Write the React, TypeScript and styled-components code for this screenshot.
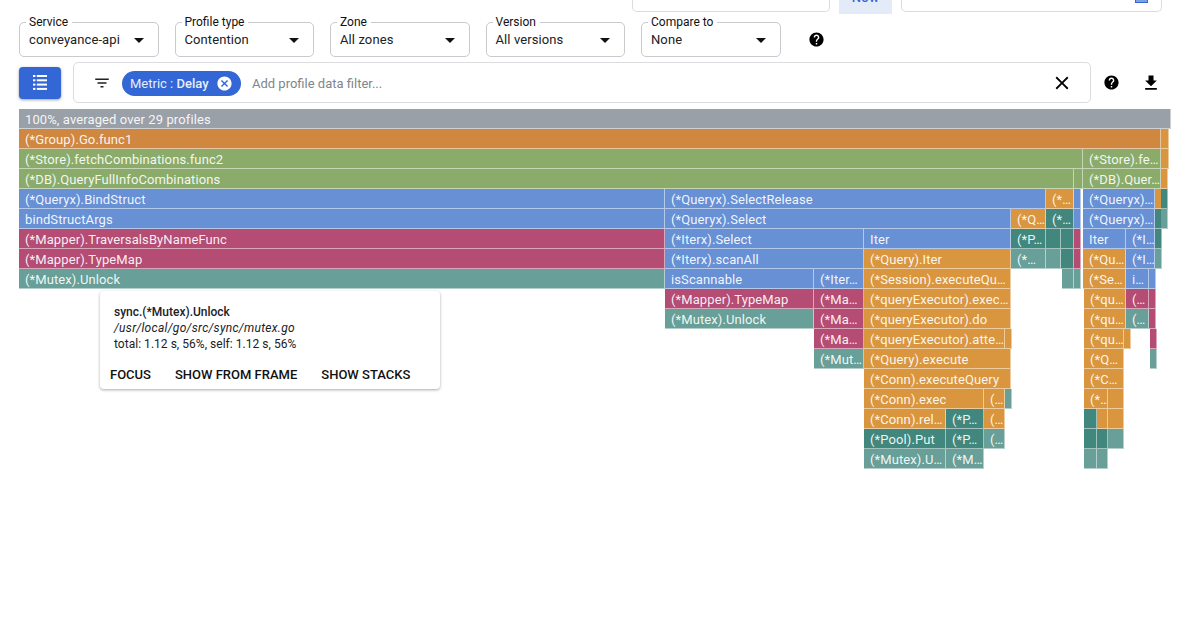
import React from 'react';
import styled, { createGlobalStyle } from 'styled-components';
import { MdArrowDropDown, MdClose, MdFileDownload, MdFilterList, MdHelp, MdCancel } from 'react-icons/md';

const C = {
  gray: '#9aa0a8',
  top: '#d08841',
  green: '#8aab6a',
  blue: '#6890d5',
  red: '#b54c74',
  dark: '#41877d',
  teal: '#689f98',
  orange: '#d9963f',
};

type Color = keyof typeof C;
// row, left x, right x, colour, label
type Frame = [number, number, number, Color, string?];

const frames: Frame[] = [
  [0, 19, 1171, 'gray', '100%, averaged over 29 profiles'],
  [1, 19, 1161, 'top', '(*Group).Go.func1'],
  [1, 1161, 1169, 'orange'],
  [2, 19, 1083, 'green', '(*Store).fetchCombinations.func2'],
  [2, 1083, 1161, 'green', '(*Store).fe…'],
  [2, 1161, 1169, 'orange'],
  [3, 19, 1074, 'green', '(*DB).QueryFullInfoCombinations'],
  [3, 1074, 1083, 'green'],
  [3, 1083, 1161, 'green', '(*DB).Quer…'],
  [3, 1161, 1167, 'orange'],
  [4, 19, 665, 'blue', '(*Queryx).BindStruct'],
  [4, 665, 1046, 'blue', '(*Queryx).SelectRelease'],
  [4, 1046, 1074, 'orange', '(*…'],
  [4, 1074, 1081, 'blue'],
  [4, 1083, 1155, 'blue', '(*Queryx)…'],
  [4, 1155, 1161, 'orange'],
  [4, 1161, 1167, 'dark'],
  [5, 19, 665, 'blue', 'bindStructArgs'],
  [5, 665, 1011, 'blue', '(*Queryx).Select'],
  [5, 1011, 1046, 'orange', '(*Q…'],
  [5, 1046, 1074, 'dark', '(*…'],
  [5, 1074, 1081, 'blue'],
  [5, 1083, 1155, 'blue', '(*Queryx)…'],
  [5, 1155, 1161, 'dark'],
  [5, 1161, 1167, 'teal'],
  [6, 19, 665, 'red', '(*Mapper).TraversalsByNameFunc'],
  [6, 665, 864, 'blue', '(*Iterx).Select'],
  [6, 864, 1011, 'blue', 'Iter'],
  [6, 1011, 1046, 'dark', '(*P…'],
  [6, 1046, 1061, 'dark'],
  [6, 1061, 1074, 'dark'],
  [6, 1074, 1081, 'red'],
  [6, 1083, 1126, 'blue', 'Iter'],
  [6, 1126, 1155, 'blue', '(*I…'],
  [6, 1155, 1160, 'dark'],
  [7, 19, 665, 'red', '(*Mapper).TypeMap'],
  [7, 665, 864, 'blue', '(*Iterx).scanAll'],
  [7, 864, 1011, 'orange', '(*Query).Iter'],
  [7, 1011, 1046, 'teal', '(*…'],
  [7, 1046, 1061, 'teal'],
  [7, 1061, 1074, 'dark'],
  [7, 1074, 1081, 'red'],
  [7, 1083, 1126, 'orange', '(*Qu…'],
  [7, 1126, 1155, 'blue', '(*I…'],
  [7, 1155, 1160, 'teal'],
  [8, 19, 665, 'teal', '(*Mutex).Unlock'],
  [8, 665, 814, 'blue', 'isScannable'],
  [8, 814, 864, 'blue', '(*Iter…'],
  [8, 864, 1011, 'orange', '(*Session).executeQu…'],
  [8, 1062, 1074, 'teal'],
  [8, 1074, 1081, 'teal'],
  [8, 1083, 1126, 'orange', '(*Se…'],
  [8, 1126, 1149, 'blue', 'i…'],
  [8, 1149, 1155, 'blue'],
  [9, 665, 814, 'red', '(*Mapper).TypeMap'],
  [9, 814, 864, 'red', '(*Ma…'],
  [9, 864, 1011, 'orange', '(*queryExecutor).exec…'],
  [9, 1084, 1126, 'orange', '(*qu…'],
  [9, 1126, 1149, 'red', '(…'],
  [9, 1149, 1155, 'red'],
  [10, 665, 814, 'teal', '(*Mutex).Unlock'],
  [10, 814, 864, 'red', '(*Ma…'],
  [10, 864, 1011, 'orange', '(*queryExecutor).do'],
  [10, 1084, 1126, 'orange', '(*qu…'],
  [10, 1126, 1149, 'teal', '(…'],
  [10, 1149, 1155, 'red'],
  [11, 814, 864, 'red', '(*Ma…'],
  [11, 864, 1005, 'orange', '(*queryExecutor).atte…'],
  [11, 1005, 1011, 'orange'],
  [11, 1084, 1124, 'orange', '(*qu…'],
  [11, 1124, 1126, 'orange'],
  [11, 1150, 1155, 'red'],
  [12, 814, 864, 'teal', '(*Mut…'],
  [12, 864, 1011, 'orange', '(*Query).execute'],
  [12, 1084, 1124, 'orange', '(*Q…'],
  [12, 1150, 1155, 'teal'],
  [13, 864, 1011, 'orange', '(*Conn).executeQuery'],
  [13, 1084, 1124, 'orange', '(*C…'],
  [14, 864, 984, 'orange', '(*Conn).exec'],
  [14, 984, 1005, 'orange', '(…'],
  [14, 1005, 1011, 'teal'],
  [14, 1084, 1108, 'orange', '(*…'],
  [14, 1108, 1124, 'orange'],
  [15, 864, 946, 'orange', '(*Conn).rel…'],
  [15, 946, 984, 'dark', '(*P…'],
  [15, 984, 1005, 'orange', '(…'],
  [15, 1084, 1097, 'dark'],
  [15, 1097, 1108, 'orange'],
  [15, 1108, 1124, 'orange'],
  [16, 864, 946, 'dark', '(*Pool).Put'],
  [16, 946, 984, 'dark', '(*P…'],
  [16, 984, 1005, 'teal', '(…'],
  [16, 1084, 1097, 'dark'],
  [16, 1097, 1108, 'dark'],
  [16, 1108, 1124, 'teal'],
  [17, 864, 946, 'teal', '(*Mutex).U…'],
  [17, 946, 984, 'teal', '(*M…'],
  [17, 1084, 1097, 'teal'],
  [17, 1097, 1108, 'teal'],
];

const selects = [
  { label: 'Service', value: 'conveyance-api' },
  { label: 'Profile type', value: 'Contention' },
  { label: 'Zone', value: 'All zones' },
  { label: 'Version', value: 'All versions' },
  { label: 'Compare to', value: 'None' },
];

function ListIcon() {
  return (
    <svg width="16" height="16" viewBox="0 0 16 16" fill="currentColor">
      {[1, 5.3, 9.6, 13.9].map((y) => (
        <g key={y}>
          <rect x="1" y={y - 1} width="2.4" height="2" />
          <rect x="4.8" y={y - 1} width="10.2" height="2" />
        </g>
      ))}
    </svg>
  );
}

export default function App() {
  return (
    <Page>
      <GlobalStyle />
      <TimeRow>
        <ClippedField $width={198} />
        <NowButton>
          <NowLabel>Now</NowLabel>
        </NowButton>
        <ClippedField $width={261}>
          <CalendarMark />
        </ClippedField>
      </TimeRow>
      <SelectRow>
        {selects.map((s) => (
          <SelectBox key={s.label}>
            <Legend>{s.label}</Legend>
            <SelectValue>{s.value}</SelectValue>
            <MdArrowDropDown size={24} color="#111" />
          </SelectBox>
        ))}
        <RowHelp>
          <MdHelp size={17} />
        </RowHelp>
      </SelectRow>
      <FilterRow>
        <ListButton>
          <ListIcon />
        </ListButton>
        <FilterBar>
          <MdFilterList size={18} color="#202124" />
          <Chip>
            <span>
              Metric : <b>Delay</b>
            </span>
            <MdCancel size={17} />
          </Chip>
          <FilterHint>Add profile data filter...</FilterHint>
          <ClearIcon>
            <MdClose size={22} />
          </ClearIcon>
        </FilterBar>
        <BarAction>
          <MdHelp size={17} />
        </BarAction>
        <BarAction>
          <MdFileDownload size={20} />
        </BarAction>
      </FilterRow>
      <Graph>
        {frames.map(([row, x0, x1, color, label], i) => (
          <FrameBox
            key={i}
            $color={C[color]}
            style={{ left: x0 - 19, top: row * 20, width: x1 - x0 }}
          >
            {label}
          </FrameBox>
        ))}
        <Tooltip>
          <TipTitle>sync.(*Mutex).Unlock</TipTitle>
          <TipPath>/usr/local/go/src/sync/mutex.go</TipPath>
          <TipLine>total: 1.12 s, 56%, self: 1.12 s, 56%</TipLine>
          <TipActions>
            <TipAction>FOCUS</TipAction>
            <TipAction>SHOW FROM FRAME</TipAction>
            <TipAction>SHOW STACKS</TipAction>
          </TipActions>
        </Tooltip>
      </Graph>
    </Page>
  );
}

const GlobalStyle = createGlobalStyle`
  html, body {
    margin: 0;
    padding: 0;
    background: #fff;
    overflow: hidden;
  }
  body {
    font-family: Roboto, "Liberation Sans", sans-serif;
    color: #202124;
  }
`;

const Page = styled.div`
  width: 1185px;
  height: 641px;
  overflow: hidden;
`;

const TimeRow = styled.div`
  display: flex;
  align-items: flex-start;
  gap: 9px;
  height: 14px;
  padding-left: 632px;
  overflow: hidden;
`;

const ClippedField = styled.div<{ $width: number }>`
  position: relative;
  box-sizing: border-box;
  width: ${(p) => p.$width}px;
  height: 12px;
  border: 1px solid #dadce0;
  border-top: none;
  border-radius: 0 0 5px 5px;
`;

const CalendarMark = styled.span`
  position: absolute;
  right: 13px;
  top: 0;
  width: 13px;
  height: 3px;
  box-sizing: border-box;
  border: 1px solid #3367d6;
  border-top: none;
  background: #7d9fe6;
`;

const NowButton = styled.div`
  display: flex;
  justify-content: center;
  width: 53px;
  height: 14px;
  background: #e3ebf9;
  overflow: hidden;
`;

const NowLabel = styled.span`
  margin-top: -9px;
  color: #3367d6;
  font-size: 13px;
  font-weight: 500;
  line-height: 14px;
  letter-spacing: 0.5px;
`;

const SelectRow = styled.div`
  display: flex;
  align-items: center;
  gap: 16px;
  margin-top: 8px;
  padding-left: 19px;
`;

const SelectBox = styled.div`
  position: relative;
  display: flex;
  align-items: center;
  justify-content: space-between;
  box-sizing: border-box;
  width: 139.5px;
  height: 35px;
  padding: 0 7px 0 9px;
  border: 1px solid #c8cacc;
  border-radius: 5px;
`;

const Legend = styled.span`
  position: absolute;
  left: 6px;
  top: -8px;
  padding: 0 4px 0 3px;
  background: #fff;
  font-size: 12px;
  line-height: 14px;
  font-weight: 400;
  color: #111;
`;

const SelectValue = styled.span`
  font-size: 13px;
  line-height: 16px;
  color: #202124;
  letter-spacing: 0.1px;
  white-space: nowrap;
`;

const RowHelp = styled.span`
  display: flex;
  margin-left: 11px;
  color: #000;
`;

const FilterRow = styled.div`
  display: flex;
  align-items: center;
  height: 41px;
  margin-top: 5px;
  padding-left: 19px;
`;

const ListButton = styled.div`
  display: flex;
  align-items: center;
  justify-content: center;
  width: 42px;
  height: 32px;
  border-radius: 4px;
  background: #3367d6;
  color: #fff;
  box-shadow: 0 1px 3px rgba(60, 64, 67, 0.5);
`;

const FilterBar = styled.div`
  display: flex;
  align-items: center;
  box-sizing: border-box;
  width: 1018px;
  height: 41px;
  margin-left: 12px;
  padding: 0 17px 0 19px;
  border: 1px solid #dadce0;
  border-radius: 5px;
`;

const Chip = styled.div`
  display: flex;
  align-items: center;
  justify-content: space-between;
  box-sizing: border-box;
  width: 119px;
  height: 25px;
  margin: 2px 0 0 11px;
  padding: 0 8px;
  border-radius: 13px;
  background: #3367d6;
  color: #e8eefb;
  font-size: 13px;
  white-space: pre;

  b {
    font-weight: 500;
  }

  svg {
    color: #fff;
  }
`;

const FilterHint = styled.span`
  margin: 2px 0 0 11px;
  font-size: 13px;
  color: #80868b;
`;

const ClearIcon = styled.span`
  display: flex;
  margin-left: auto;
  color: #000;
`;

const BarAction = styled.span`
  display: flex;
  justify-content: center;
  width: 40px;
  color: #000;
`;

const Graph = styled.div`
  position: relative;
  margin: 6px 0 0 19px;
  height: 380px;
`;

const FrameBox = styled.div<{ $color: string }>`
  position: absolute;
  box-sizing: border-box;
  height: 20px;
  padding: 1px 0 0 6px;
  border-right: 1px solid rgba(255, 255, 255, 0.5);
  border-bottom: 1px solid rgba(255, 255, 255, 0.5);
  background: ${(p) => p.$color};
  color: rgba(255, 255, 255, 0.92);
  font-size: 13px;
  line-height: 20px;
  letter-spacing: 0.1px;
  white-space: nowrap;
  overflow: hidden;
`;

const Tooltip = styled.div`
  position: absolute;
  left: 81px;
  top: 182px;
  box-sizing: border-box;
  width: 340px;
  height: 98px;
  padding: 13px 14px 0;
  border-radius: 4px;
  background: #fff;
  box-shadow: 0 1px 3px rgba(60, 64, 67, 0.45);
  font-size: 12px;
  line-height: 16px;
  color: #202124;
`;

const TipTitle = styled.div`
  font-weight: 500;
`;

const TipPath = styled.div`
  font-style: italic;
  letter-spacing: 0.3px;
`;

const TipLine = styled.div`
  letter-spacing: 0.03px;
`;

const TipActions = styled.div`
  display: flex;
  gap: 24px;
  margin: 15px 0 0 -4px;
`;

const TipAction = styled.span`
  font-size: 13px;
  font-weight: 500;
  color: #111;
`;
